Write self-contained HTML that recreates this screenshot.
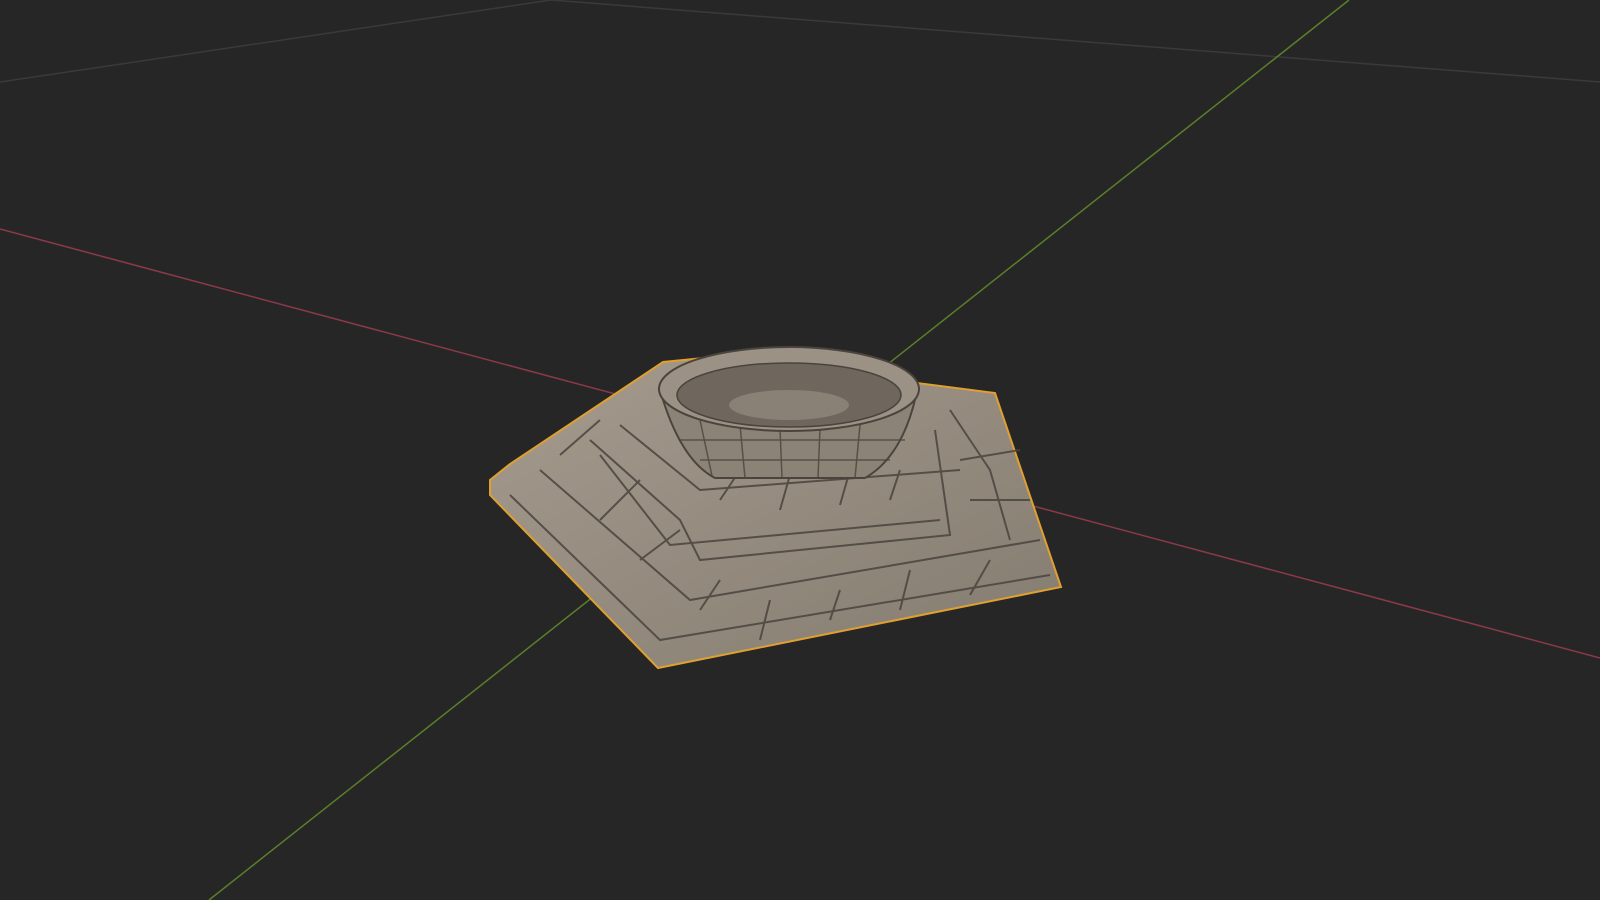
<!DOCTYPE html>
<html><head><style>
html,body{margin:0;padding:0;width:1600px;height:900px;overflow:hidden;background:#262626}
</style></head><body>
<svg width="1600" height="900" viewBox="0 0 1600 900" xmlns="http://www.w3.org/2000/svg">
<rect width="1600" height="900" fill="#262626"/>
<line x1="0" y1="82" x2="551" y2="0" stroke="#3a3a3a" stroke-width="1.5"/>
<line x1="551" y1="0" x2="1600" y2="82" stroke="#3a3a3a" stroke-width="1.5"/>
<line x1="0" y1="229" x2="1600" y2="658" stroke="#8a3a48" stroke-width="1.5"/>
<line x1="209" y1="900" x2="1349" y2="0" stroke="#5c7f2a" stroke-width="1.5"/>
<defs>
<linearGradient id="g" x1="0" y1="0" x2="1" y2="1">
<stop offset="0" stop-color="#a59b8d"/><stop offset="1" stop-color="#847b70"/>
</linearGradient>
</defs>
<polygon points="490,480 510,464 663,362 714,357 995,393 1061,587 658,668 490,495" fill="url(#g)" stroke="#e0a030" stroke-width="2"/>
<g stroke="#4a443d" stroke-width="2" fill="none" opacity="0.85">
<path d="M510,495 L660,640 L1050,575"/>
<path d="M540,470 L690,600 L1040,540"/>
<path d="M590,440 L680,520 L700,560 L950,535 L935,430"/>
<path d="M600,455 L670,545 L940,520"/>
<path d="M620,425 L700,490 L960,470"/>
<path d="M560,455 L600,420 M600,520 L640,480 M640,560 L680,530 M700,610 L720,580 M760,640 L770,600 M830,620 L840,590 M900,610 L910,570 M970,595 L990,560"/>
<path d="M950,410 L990,470 L1010,540 M960,460 L1020,450 M970,500 L1030,500"/>
<path d="M720,500 L740,470 M780,510 L790,475 M840,505 L850,470 M890,500 L900,470"/>
</g>
<path d="M660,390 Q680,460 715,478 L865,478 Q905,455 918,386 Z" fill="#8c8377" stroke="#4a443d" stroke-width="2"/>
<g stroke="#4a443d" stroke-width="1.5" opacity="0.8">
<line x1="680" y1="440" x2="905" y2="440"/><line x1="700" y1="460" x2="890" y2="460"/>
<line x1="700" y1="420" x2="712" y2="476"/><line x1="740" y1="425" x2="745" y2="478"/><line x1="780" y1="428" x2="782" y2="478"/><line x1="820" y1="428" x2="818" y2="478"/><line x1="860" y1="425" x2="855" y2="478"/>
</g>
<ellipse cx="789" cy="389" rx="130" ry="42" fill="#9b9285" stroke="#4a443d" stroke-width="2"/>
<ellipse cx="789" cy="395" rx="112" ry="32" fill="#6f675d" stroke="#4a443d" stroke-width="1.5"/>
<ellipse cx="789" cy="405" rx="60" ry="15" fill="#8a8176"/>
</svg>
</body></html>
